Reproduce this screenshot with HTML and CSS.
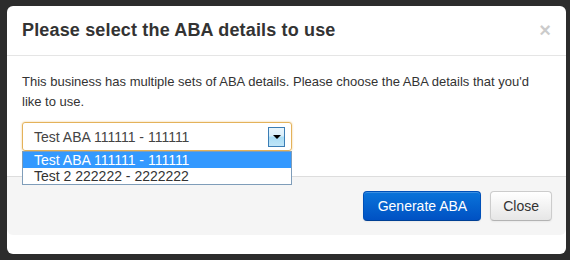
FILE: index.html
```html
<!DOCTYPE html>
<html>
<head>
<meta charset="utf-8">
<link rel="stylesheet" href="styles.css">
</head>
<body>
<div class="modal">
  <div class="modal-header">
    <span class="close">×</span>
    <h3 class="title">Please select the ABA details to use</h3>
  </div>
  <div class="modal-body">
    <p class="intro">This business has multiple sets of ABA details. Please choose the ABA details that you'd like to use.</p>
    <div class="select-wrap">
      <div class="select">
        <span class="select-value">Test ABA 111111 - 111111</span>
        <span class="select-arrow"><span class="tri"></span></span>
      </div>
      <ul class="options">
        <li class="option selected">Test ABA 111111 - 111111</li>
        <li class="option">Test 2 222222 - 2222222</li>
      </ul>
    </div>
  </div>
  <div class="modal-footer">
    <button class="btn btn-primary">Generate ABA</button>
    <button class="btn">Close</button>
  </div>
</div>
</body>
</html>
```
FILE: styles.css
```css
html, body {
  margin: 0;
  padding: 0;
}
body {
  background: #2c2c2c;
  width: 570px;
  height: 260px;
  overflow: hidden;
  padding: 6px 0 0 7px;
  box-sizing: border-box;
  font-family: "Liberation Sans", Arial, sans-serif;
  color: #333;
}
.modal {
  width: 559px;
  height: 248px;
  background: #fff;
  border-radius: 6px;
  display: flex;
  flex-direction: column;
}
.modal-header {
  padding: 9px 15px 10px 15px;
  border-bottom: 1px solid #e5e5e5;
  height: 30px;
}
.title {
  margin: 0;
  font-size: 18px;
  line-height: 30px;
  font-weight: bold;
  letter-spacing: 0.16px;
  color: #333;
}
.close {
  float: right;
  font-size: 20px;
  font-weight: bold;
  line-height: 30px;
  color: #000;
  opacity: 0.2;
  margin-right: 0;
}
.modal-body {
  padding: 16px 15px 0 15px;
  height: 104px;
}
.intro {
  margin: 0 0 10px 0;
  font-size: 13px;
  line-height: 20px;
  color: #333;
}
.select-wrap {
  position: relative;
  width: 270px;
}
.select {
  box-sizing: border-box;
  height: 29px;
  width: 270px;
  border: 1px solid #e4b25a;
  box-shadow: 0 0 2px rgba(232, 180, 90, 0.8);
  border-radius: 3px;
  display: flex;
  align-items: center;
  justify-content: space-between;
  padding: 0 6px 0 11px;
  font-size: 14px;
  color: #444;
}
.select-arrow {
  box-sizing: border-box;
  width: 17px;
  height: 20px;
  border: 1px solid #3b7db5;
  background: linear-gradient(#e9f5fc 0%, #d9eefa 45%, #a9dcf5 50%, #bfe5f8 100%);
  display: flex;
  align-items: center;
  justify-content: center;
}
.tri {
  width: 0;
  height: 0;
  border-left: 4px solid transparent;
  border-right: 4px solid transparent;
  border-top: 4px solid #000;
}
.options {
  position: absolute;
  left: 0;
  top: 29px;
  margin: 0;
  padding: 0;
  list-style: none;
  width: 270px;
  box-sizing: border-box;
  border: 1px solid #7f9db9;
  background: #fff;
  z-index: 5;
}
.option {
  font-size: 14px;
  line-height: 16px;
  padding: 0 11px;
  color: #333;
}
.option.selected {
  background: #3399ff;
  color: #fff;
}
.modal-footer {
  background: #f5f5f5;
  border-top: 1px solid #ddd;
  border-radius: 0 0 6px 6px;
  padding: 14px 14px 14px 15px;
  display: flex;
  justify-content: flex-end;
  gap: 9px;
}
.btn {
  font-family: "Liberation Sans", Arial, sans-serif;
  font-size: 14px;
  height: 30px;
  line-height: 20px;
  padding: 4px 12px;
  border-radius: 4px;
  border: 1px solid #ccc;
  border-bottom-color: #b3b3b3;
  color: #333;
  background: linear-gradient(#ffffff, #e6e6e6);
  box-shadow: inset 0 1px 0 rgba(255,255,255,0.2), 0 1px 2px rgba(0,0,0,0.05);
  margin: 0;
}
.btn-primary {
  color: #fff;
  background: linear-gradient(#0a74da, #0051c3);
  border-color: #0050b8 #0050b8 #003f94;
  padding: 4px 13px 4px 14px;
}
```
